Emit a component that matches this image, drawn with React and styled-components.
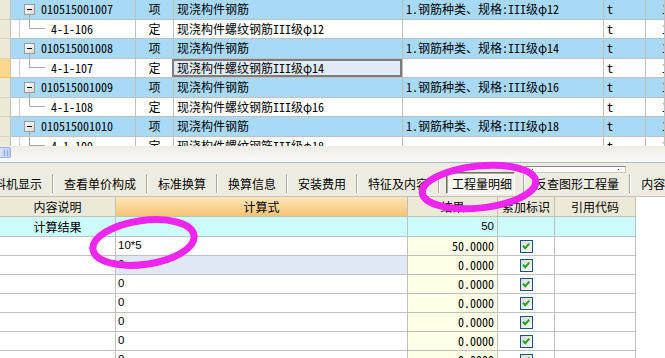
import styled, { createGlobalStyle } from "styled-components";

const FONT = `"Noto Sans Mono CJK SC", "Noto Sans CJK SC", "Liberation Sans", sans-serif`;
const NUM = `"Liberation Sans", "DejaVu Sans", sans-serif`;
const LINE = "#c0c0c0";

const GlobalStyle = createGlobalStyle`
  html, body { margin: 0; padding: 0; background: #fff; overflow: hidden; }
  body { font-family: ${FONT}; font-size: 12px; color: #000; }
`;

const topRows = [
  { code: "010515001007", type: "项", name: "现浇构件钢筋", feat: "1.钢筋种类、规格:III级φ12" },
  { sub: "4-1-106", type: "定", name: "现浇构件螺纹钢筋III级φ12" },
  { code: "010515001008", type: "项", name: "现浇构件钢筋", feat: "1.钢筋种类、规格:III级φ14" },
  { sub: "4-1-107", type: "定", name: "现浇构件螺纹钢筋III级φ14", active: true },
  { code: "010515001009", type: "项", name: "现浇构件钢筋", feat: "1.钢筋种类、规格:III级φ16" },
  { sub: "4-1-108", type: "定", name: "现浇构件螺纹钢筋III级φ16" },
  { code: "010515001010", type: "项", name: "现浇构件钢筋", feat: "1.钢筋种类、规格:III级φ18" },
  { sub: "4-1-109", type: "定", name: "现浇构件螺纹钢筋III级φ18" },
];

const tabs = ["料机显示", "查看单价构成", "标准换算", "换算信息", "安装费用", "特征及内容"];

const detailRows = [
  { expr: "10*5", result: "50.0000" },
  { expr: "0", result: "0.0000", selected: true },
  { expr: "0", result: "0.0000" },
  { expr: "0", result: "0.0000" },
  { expr: "0", result: "0.0000" },
  { expr: "0", result: "0.0000" },
  { expr: "0", result: "0.0000" },
];

export default function App() {
  return (
    <>
      <GlobalStyle />
      <Frame>
        <TopGrid>
          {topRows.map((r, i) => (
            <TRow key={i} $blue={!!r.code}>
              <Indicator $active={r.active} />
              {r.code ? (
                <CodeCell>
                  <ExpandBox />
                  <Stem />
                  <CodeText $gap="6px">{r.code}</CodeText>
                </CodeCell>
              ) : (
                <CodeCell>
                  <svg width="40" height="19" style={{ flex: "none" }}>
                    <line x1="8.5" y1="0" x2="8.5" y2="19" stroke="#d0d0d0" />
                    <line x1="18.5" y1="0" x2="18.5" y2="9.5" stroke="#a8a8a8" />
                    <line x1="18.5" y1="9.5" x2="34" y2="9.5" stroke="#a8a8a8" />
                  </svg>
                  <CodeText $gap="0">{r.sub}</CodeText>
                </CodeCell>
              )}
              <Cell $center>{r.type}</Cell>
              <Cell $focus={r.active}>{r.name}</Cell>
              <Cell>{r.feat || ""}</Cell>
              <Cell>t</Cell>
              <Cell $pad="16px">1</Cell>
            </TRow>
          ))}
        </TopGrid>

        <ScrollTrack>
          <Thumb />
        </ScrollTrack>

        <TabBar>
          <MiniBar />
          {tabs.map((t, i) => (
            <TabGroup key={t}>
              <Tab $first={i === 0}>{t}</Tab>
              <Sep />
            </TabGroup>
          ))}
          <SelTab>工程量明细</SelTab>
          <Sep />
          <Tab>反查图形工程量</Tab>
          <Sep />
          <Tab>内容指引</Tab>
        </TabBar>

        <BRow $h="20px">
          <HeadCell>内容说明</HeadCell>
          <HeadCell $orange>计算式</HeadCell>
          <HeadCell>结果</HeadCell>
          <HeadCell>累加标识</HeadCell>
          <HeadCell>引用代码</HeadCell>
          <Filler />
        </BRow>
        <BRow $h="20px">
          <BCell $bg="#ccfcfc" $center>计算结果</BCell>
          <BCell $bg="#ccfcfc" />
          <BCell $bg="#ccfcfc" $right $num>50</BCell>
          <BCell $bg="#ccfcfc" />
          <BCell $bg="#ccfcfc" />
          <Filler />
        </BRow>
        {detailRows.map((r, i) => (
          <BRow key={i} $h="19px">
            <BCell />
            <BCell $num $bg={r.selected ? "#e0e8f5" : "#fff"}>{r.expr}</BCell>
            <BCell $right $bg="#ffffe8">{r.result}</BCell>
            <BCell $center>
              <Check>
                <svg width="10" height="10" viewBox="0 0 10 10">
                  <path d="M2 4.8 L4.2 7.2 L8.3 2.6" fill="none" stroke="#22a322" strokeWidth="2" />
                </svg>
              </Check>
            </BCell>
            <BCell />
            <Filler />
          </BRow>
        ))}

        <Marks width="665" height="358">
          <ellipse cx="479" cy="187" rx="57" ry="21" transform="rotate(-6 479 187)" />
          <ellipse cx="143.5" cy="242.5" rx="51" ry="22" transform="rotate(-8 143.5 242.5)" />
        </Marks>
      </Frame>
    </>
  );
}

const Frame = styled.div`
  position: relative;
  width: 665px;
  height: 358px;
  overflow: hidden;
  display: flex;
  flex-direction: column;
  background: #fff;
`;

const TopGrid = styled.div`
  height: 146px;
  flex: none;
  overflow: hidden;
`;

const TRow = styled.div`
  display: grid;
  grid-template-columns: 11px 125px 38px 229px 201px 42px 1fr;
  height: 19.5px;
  background: ${(p) => (p.$blue ? "#a8daf8" : "#fff")};
`;

const Cell = styled.div`
  box-sizing: border-box;
  display: flex;
  align-items: center;
  justify-content: ${(p) => (p.$center ? "center" : "flex-start")};
  padding-left: ${(p) => (p.$center ? "0" : p.$pad || "3px")};
  border-right: 1px solid ${LINE};
  border-bottom: 1px solid ${LINE};
  white-space: nowrap;
  overflow: hidden;
  line-height: 1;
  ${(p) =>
    p.$focus &&
    `
    background: #e1ebf7;
    box-shadow: inset 0 0 0 2px #7c7c7c;
    margin-left: -2px;
    padding-left: 5px;
  `}
`;

const Indicator = styled.div`
  box-sizing: border-box;
  background: ${(p) => (p.$active ? "#ffd78c" : "#ece9d8")};
  border-right: 1px solid ${LINE};
  border-bottom: 1px solid ${(p) => (p.$active ? "#e8c070" : "#d8d4c4")};
`;

const CodeCell = styled(Cell)`
  position: relative;
  padding-left: 0;
`;

const ExpandBox = styled.span`
  flex: none;
  position: relative;
  box-sizing: border-box;
  width: 11px;
  height: 11px;
  margin-left: 13px;
  border: 1px solid #9a9a9a;
  background: linear-gradient(135deg, #ffffff, #d9d8d0);
  &::after {
    content: "";
    position: absolute;
    left: 2px;
    top: 4px;
    width: 5px;
    height: 1px;
    background: #000;
  }
`;

const Stem = styled.span`
  position: absolute;
  left: 18px;
  bottom: 0;
  width: 1px;
  height: 4px;
  background: #a8a8a8;
`;

const CodeText = styled.span`
  margin-left: ${(p) => p.$gap};
`;

const ScrollTrack = styled.div`
  height: 16px;
  flex: none;
  background: linear-gradient(#eeece5, #fbfbf9);
`;

const Thumb = styled.div`
  box-sizing: border-box;
  width: 11px;
  height: 11px;
  margin-top: 1px;
  border: 1px solid #98b1e4;
  border-left: none;
  border-radius: 0 2px 2px 0;
  background: repeating-linear-gradient(90deg, #c6d6fa 0 2px, #8fa8dc 2px 3px) 2px 2px / 6px 6px no-repeat,
    linear-gradient(90deg, #d6e2fc, #bccdf6);
`;

const TabBar = styled.div`
  position: relative;
  box-sizing: border-box;
  height: 35px;
  flex: none;
  display: flex;
  align-items: center;
  padding-top: 7px;
  background: #eeece1;
  border-top: 1px solid #a9b8cf;
  border-bottom: 1px solid #c4c1b2;
  white-space: nowrap;
`;

const TabGroup = styled.div`
  display: flex;
  align-items: center;
`;

const Tab = styled.div`
  padding: 0 10px;
  margin-left: ${(p) => (p.$first ? "-16px" : "0")};
  line-height: 19px;
`;

const Sep = styled.div`
  flex: none;
  width: 2px;
  height: 19px;
  background: linear-gradient(90deg, #aca899 50%, #ffffff 50%);
`;

const SelTab = styled.div`
  box-sizing: border-box;
  height: 22px;
  margin: 0 8px 0 6px;
  padding: 0 2px 0 5px;
  display: flex;
  align-items: center;
  background: #f6f5f0;
  border-top: 1px solid #716f64;
  border-left: 1px solid #716f64;
  border-bottom: 1px solid #fff;
  border-right: 1px solid #fff;
  box-shadow: inset 1px 1px 0 #aca899;
`;

const MiniBar = styled.div`
  position: absolute;
  left: 525px;
  top: 3px;
  box-sizing: border-box;
  width: 101px;
  height: 7px;
  border: 1px solid #8a8a8a;
  border-right-color: #c8c8c8;
  border-bottom-color: #c8c8c8;
  background: radial-gradient(circle, #444 0.8px, transparent 1px) 5px 1px / 3px 3px no-repeat,
    radial-gradient(circle, #444 0.8px, transparent 1px) 91px 1px / 3px 3px no-repeat, #fbfbf8;
`;

const BRow = styled.div`
  display: grid;
  grid-template-columns: 116px 292px 90px 57px 81px 1fr;
  height: ${(p) => p.$h};
  flex: none;
`;

const HeadCell = styled.div`
  box-sizing: border-box;
  display: flex;
  align-items: center;
  justify-content: center;
  background: ${(p) => (p.$orange ? "linear-gradient(#fde6ba, #f6c474)" : "#ece9d8")};
  border-right: 1px solid #c4c1b2;
  border-bottom: 1px solid #c4c1b2;
  line-height: 1;
`;

const BCell = styled.div`
  box-sizing: border-box;
  display: flex;
  align-items: center;
  justify-content: ${(p) => (p.$center ? "center" : p.$right ? "flex-end" : "flex-start")};
  padding: 0 ${(p) => (p.$right ? "3px" : "0")} 0 ${(p) => (p.$center || p.$right ? "0" : "2px")};
  background: ${(p) => p.$bg || "#fff"};
  border-right: 1px solid ${LINE};
  border-bottom: 1px solid ${LINE};
  font-family: ${(p) => (p.$num ? NUM : FONT)};
  font-size: ${(p) => (p.$num ? "11.5px" : "12px")};
  line-height: 1;
  white-space: nowrap;
`;

const Filler = styled.div`
  background: #fff;
`;

const Check = styled.span`
  box-sizing: border-box;
  width: 13px;
  height: 13px;
  display: flex;
  align-items: center;
  justify-content: center;
  border: 1px solid #1c5180;
  background: linear-gradient(135deg, #dcdcd6, #f8f8f5);
`;

const Marks = styled.svg`
  position: absolute;
  left: 0;
  top: 0;
  pointer-events: none;
  fill: none;
  stroke: #f024ef;
  stroke-width: 7;
`;
